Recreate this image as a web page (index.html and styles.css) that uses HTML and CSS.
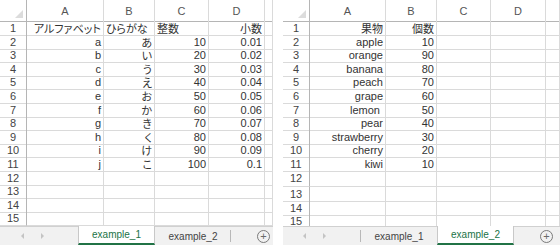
FILE: index.html
```html
<!DOCTYPE html>
<html>
<head>
  <title>Excel sheets</title>
  <link rel="stylesheet" href="styles.css">
</head>
<body>
  <!-- Sheet example_1 -->
  <div class="panel panel-left">
    <div class="sheet">
      <div class="row head"><div class="corner"><span class="tri"></span></div><div class="c ch">A</div><div class="c ch">B</div><div class="c ch">C</div><div class="c ch">D</div><div class="c ch"></div></div>
      <div class="row"><div class="rh">1</div><div class="c jp indent">アルファベット</div><div class="c jp">ひらがな</div><div class="c jp">整数</div><div class="c r jp">小数</div><div class="c"></div></div>
      <div class="row"><div class="rh">2</div><div class="c r">a</div><div class="c r jp">あ</div><div class="c r">10</div><div class="c r">0.01</div><div class="c"></div></div>
      <div class="row"><div class="rh">3</div><div class="c r">b</div><div class="c r jp">い</div><div class="c r">20</div><div class="c r">0.02</div><div class="c"></div></div>
      <div class="row"><div class="rh">4</div><div class="c r">c</div><div class="c r jp">う</div><div class="c r">30</div><div class="c r">0.03</div><div class="c"></div></div>
      <div class="row"><div class="rh">5</div><div class="c r">d</div><div class="c r jp">え</div><div class="c r">40</div><div class="c r">0.04</div><div class="c"></div></div>
      <div class="row"><div class="rh">6</div><div class="c r">e</div><div class="c r jp">お</div><div class="c r">50</div><div class="c r">0.05</div><div class="c"></div></div>
      <div class="row"><div class="rh">7</div><div class="c r">f</div><div class="c r jp">か</div><div class="c r">60</div><div class="c r">0.06</div><div class="c"></div></div>
      <div class="row"><div class="rh">8</div><div class="c r">g</div><div class="c r jp">き</div><div class="c r">70</div><div class="c r">0.07</div><div class="c"></div></div>
      <div class="row"><div class="rh">9</div><div class="c r">h</div><div class="c r jp">く</div><div class="c r">80</div><div class="c r">0.08</div><div class="c"></div></div>
      <div class="row"><div class="rh">10</div><div class="c r">i</div><div class="c r jp">け</div><div class="c r">90</div><div class="c r">0.09</div><div class="c"></div></div>
      <div class="row"><div class="rh">11</div><div class="c r">j</div><div class="c r jp">こ</div><div class="c r">100</div><div class="c r">0.1</div><div class="c"></div></div>
      <div class="row"><div class="rh">12</div><div class="c"></div><div class="c"></div><div class="c"></div><div class="c"></div><div class="c"></div></div>
      <div class="row"><div class="rh">13</div><div class="c"></div><div class="c"></div><div class="c"></div><div class="c"></div><div class="c"></div></div>
      <div class="row"><div class="rh">14</div><div class="c"></div><div class="c"></div><div class="c"></div><div class="c"></div><div class="c"></div></div>
      <div class="row"><div class="rh">15</div><div class="c"></div><div class="c"></div><div class="c"></div><div class="c"></div><div class="c"></div></div>
    </div>
    <div class="tabbar">
      <div class="nav"><span class="arr arr-l"></span><span class="arr arr-r"></span></div>
      <div class="tab active">example_1</div>
      <div class="tab sep-right">example_2</div>
      <div class="add">+</div>
    </div>
  </div>

  <!-- Sheet example_2 -->
  <div class="panel panel-right">
    <div class="sheet">
      <div class="row head"><div class="corner"><span class="tri"></span></div><div class="c ch">A</div><div class="c ch">B</div><div class="c ch">C</div><div class="c ch">D</div><div class="c ch"></div></div>
      <div class="row"><div class="rh">1</div><div class="c r jp">果物</div><div class="c r jp">個数</div><div class="c"></div><div class="c"></div><div class="c"></div></div>
      <div class="row"><div class="rh">2</div><div class="c r">apple</div><div class="c r">10</div><div class="c"></div><div class="c"></div><div class="c"></div></div>
      <div class="row"><div class="rh">3</div><div class="c r">orange</div><div class="c r">90</div><div class="c"></div><div class="c"></div><div class="c"></div></div>
      <div class="row"><div class="rh">4</div><div class="c r">banana</div><div class="c r">80</div><div class="c"></div><div class="c"></div><div class="c"></div></div>
      <div class="row"><div class="rh">5</div><div class="c r">peach</div><div class="c r">70</div><div class="c"></div><div class="c"></div><div class="c"></div></div>
      <div class="row"><div class="rh">6</div><div class="c r">grape</div><div class="c r">60</div><div class="c"></div><div class="c"></div><div class="c"></div></div>
      <div class="row"><div class="rh">7</div><div class="c r">lemon&nbsp;</div><div class="c r">50</div><div class="c"></div><div class="c"></div><div class="c"></div></div>
      <div class="row"><div class="rh">8</div><div class="c r">pear</div><div class="c r">40</div><div class="c"></div><div class="c"></div><div class="c"></div></div>
      <div class="row"><div class="rh">9</div><div class="c r">strawberry</div><div class="c r">30</div><div class="c"></div><div class="c"></div><div class="c"></div></div>
      <div class="row"><div class="rh">10</div><div class="c r">cherry</div><div class="c r">20</div><div class="c"></div><div class="c"></div><div class="c"></div></div>
      <div class="row"><div class="rh">11</div><div class="c r">kiwi</div><div class="c r">10</div><div class="c"></div><div class="c"></div><div class="c"></div></div>
      <div class="row tall"><div class="rh">12</div><div class="c"></div><div class="c"></div><div class="c"></div><div class="c"></div><div class="c"></div></div>
      <div class="row"><div class="rh">13</div><div class="c"></div><div class="c"></div><div class="c"></div><div class="c"></div><div class="c"></div></div>
      <div class="row"><div class="rh">14</div><div class="c"></div><div class="c"></div><div class="c"></div><div class="c"></div><div class="c"></div></div>
      <div class="row"><div class="rh">15</div><div class="c"></div><div class="c"></div><div class="c"></div><div class="c"></div><div class="c"></div></div>
    </div>
    <div class="tabbar">
      <div class="nav sep-right"><span class="arr arr-l"></span><span class="arr arr-r"></span></div>
      <div class="tab">example_1</div>
      <div class="tab active">example_2</div>
      <div class="add">+</div>
    </div>
  </div>
</body>
</html>
```

FILE: styles.css
```css
body {
  margin: 0;
  display: flex;
  gap: 10px;
  width: 560px;
  height: 251px;
  overflow: hidden;
  background-color: #fff;
  font-family: 'Liberation Sans', 'Noto Sans CJK JP', sans-serif;
  font-size: 11px;
  color: #333;
}

.panel {
  display: flex;
  flex-direction: column;
  height: 245px;
  overflow: hidden;
}

.panel-left {
  width: 273px;
}

.panel-right {
  flex: 1;
}

.sheet {
  height: 226px;
  overflow: hidden;
}

.row {
  display: grid;
  height: 13.6px;
}

.panel-left .row {
  grid-template-columns: 27px 77px 51px 54px 56px 1fr;
}

.panel-right .row {
  grid-template-columns: 27px 76px 51px 54px 55px 1fr;
}

.row.head {
  height: 21px;
}

.row.tall {
  height: 16.5px;
}

.c,
.rh,
.corner {
  box-sizing: border-box;
  border-right: 1px solid #dadada;
  border-bottom: 1px solid #dadada;
  white-space: nowrap;
  line-height: 13px;
  padding: 1px 2px 0;
}

.c.r {
  text-align: right;
}

.jp {
  font-family: 'Noto Sans CJK JP', sans-serif;
  font-feature-settings: "palt";
  line-height: 12px;
  padding-top: 1px;
}

.indent {
  padding-left: 7px;
}

.rh {
  text-align: center;
  color: #444;
  border-right-color: #b5b5b5;
  padding: 1px 0 0;
}

.head .c,
.head .corner {
  border-bottom-color: #b5b5b5;
}

.ch {
  text-align: center;
  color: #555;
  line-height: 20px;
}

.corner {
  position: relative;
  border-right-color: #b5b5b5;
}

.tri {
  position: absolute;
  right: 3px;
  bottom: 3px;
  width: 0;
  height: 0;
  border-left: 8px solid transparent;
  border-bottom: 8px solid #dcdcdc;
}

.tabbar {
  display: flex;
  align-items: stretch;
  height: 19px;
  background-color: #f1f1f1;
  border-top: 1px solid #d0d0d0;
  box-sizing: border-box;
  font-size: 10px;
  color: #444;
}

.nav {
  width: 78px;
  display: flex;
  align-items: center;
  gap: 17px;
  padding-left: 21px;
  box-sizing: border-box;
}

.panel-right .nav {
  padding-left: 20px;
}

.arr {
  width: 0;
  height: 0;
  border-top: 3px solid transparent;
  border-bottom: 3px solid transparent;
}

.arr-l {
  border-right: 3px solid #c4c4c4;
}

.arr-r {
  border-left: 3px solid #c4c4c4;
}

.tab {
  width: 76px;
  display: flex;
  align-items: center;
  justify-content: center;
  line-height: 17px;
  box-sizing: border-box;
}

.tab.active {
  width: 77px;
  background-color: #fff;
  color: #217346;
  border-left: 1px solid #c8c8c8;
  border-right: 1px solid #c8c8c8;
  border-bottom: 2px solid #217346;
  margin-top: -1px;
}

.sep-right {
  position: relative;
}

.sep-right::after {
  content: "";
  position: absolute;
  right: 0;
  top: 3px;
  height: 12px;
  border-right: 1px solid #b8b8b8;
}

.add {
  width: 11px;
  height: 11px;
  margin: 3px 0 0 26px;
  border: 1px solid #7a7a7a;
  border-radius: 50%;
  color: #6a6a6a;
  font-size: 11px;
  line-height: 11px;
  text-align: center;
}
```
